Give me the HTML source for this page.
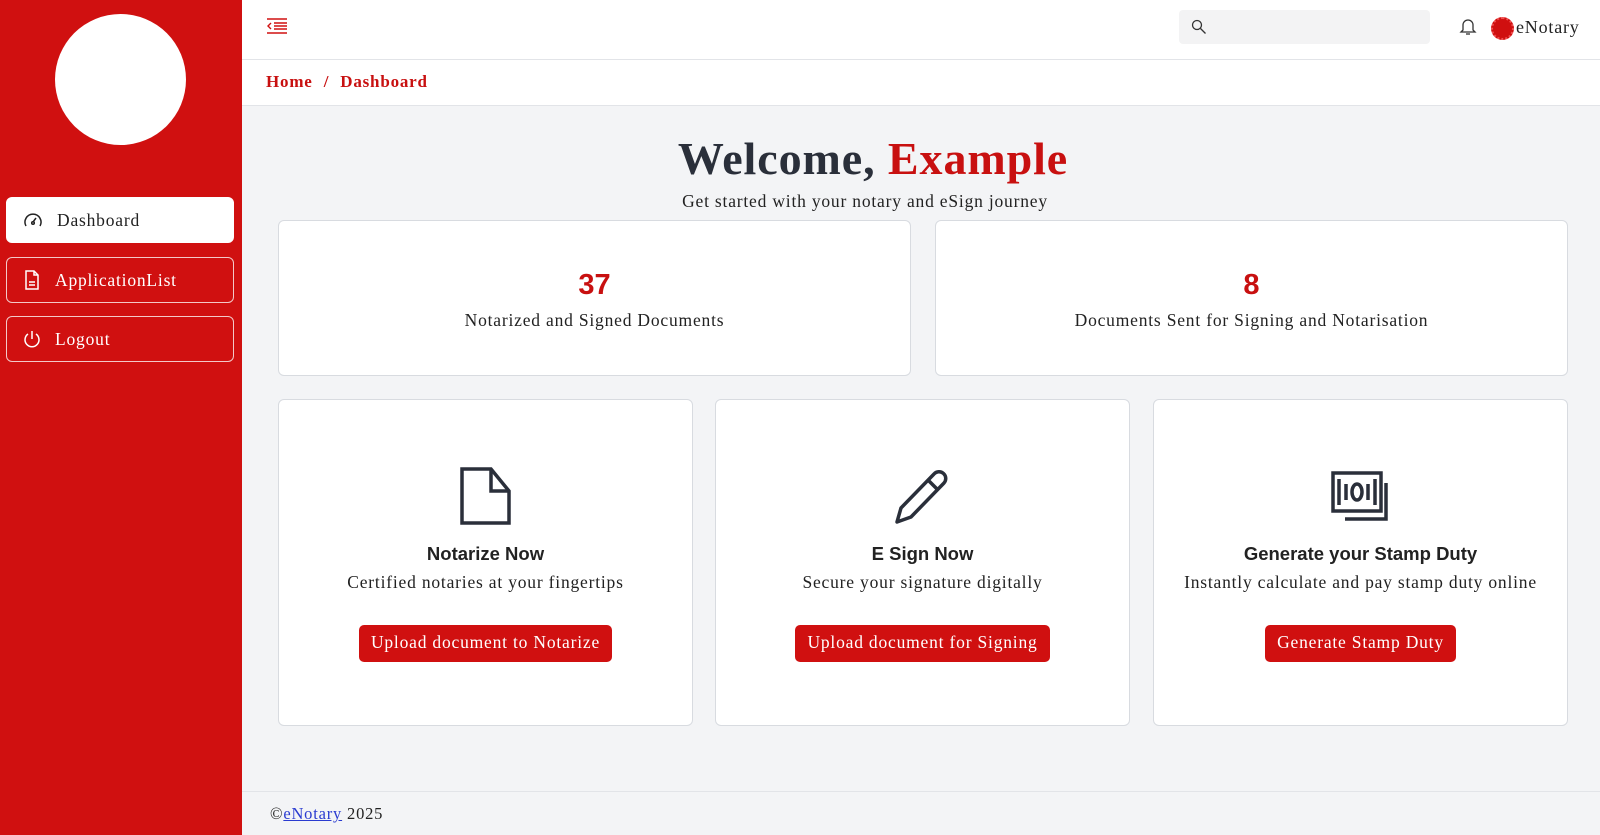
<!DOCTYPE html>
<html><head><meta charset="utf-8"><style>
*{box-sizing:border-box;margin:0;padding:0}
body{width:1600px;height:835px;overflow:hidden;background:#f3f4f6;font-family:"Liberation Serif",serif;color:#222;position:relative;letter-spacing:0.05em}
.sb{position:absolute;left:0;top:0;width:242px;height:835px;background:#d01010}
.av{position:absolute;left:55px;top:14px;width:131px;height:131px;border-radius:50%;background:#fff}
.nav{position:absolute;left:6px;width:228px;height:46px;border:1.5px solid #f3c9c9;border-radius:6px;color:#fff;font-size:17.5px;display:flex;align-items:center;padding-left:16px}
.nav svg{margin-right:14px}
.nav.act{background:#fff;color:#222;border-color:#fff}
.hd{position:absolute;left:242px;top:0;right:0;height:60px;background:#fff;border-bottom:1px solid #e2e4e8}
.bc{position:absolute;left:242px;top:60px;right:0;height:46px;background:#fff;border-bottom:1px solid #e2e4e8;color:#c81010;font-weight:bold;font-size:17px;padding:12px 0 0 24px}
.card{position:absolute;background:#fff;border:1px solid #d8dbe0;border-radius:6px;text-align:center}
.num{font-family:"Liberation Sans",sans-serif;font-weight:bold;color:#c81010;font-size:29px;letter-spacing:0}
.ct{font-size:17.5px;color:#222}
.t{font-family:"Liberation Sans",sans-serif;font-weight:bold;font-size:18.5px;color:#222;letter-spacing:0}
.btn{display:inline-block;background:#d01010;color:#fff;font-size:17.5px;border-radius:5px;padding:7px 12px;height:37px}
.ft{position:absolute;left:242px;right:0;top:791px;height:44px;background:#f3f4f6;border-top:1px solid #e2e4e8;font-size:16.5px;padding:12px 0 0 28px}
.ic{display:block;margin:67px auto 0;height:58px}
</style></head><body>
<div class="sb">
<div class="av"></div>
<div class="nav act" style="top:197px"><svg width="20" height="18" viewBox="0 0 20 18" fill="none" stroke="#222" stroke-width="1.5"><path d="M3 15a8 8 0 1 1 14 0"/><path d="M10 11l3-4"/><circle cx="10" cy="12" r="1.3"/></svg>Dashboard</div>
<div class="nav" style="top:257px"><svg width="18" height="20" viewBox="0 0 18 20" fill="none" stroke="#fff" stroke-width="1.5"><path d="M3 1h8l4 4v14H3z"/><path d="M11 1v4h4M6 12h6M6 15h6"/></svg>ApplicationList</div>
<div class="nav" style="top:316px"><svg width="18" height="20" viewBox="0 0 18 20" fill="none" stroke="#fff" stroke-width="1.5"><path d="M5 5a7 7 0 1 0 8 0"/><path d="M9 2v8"/></svg>Logout</div>
</div>
<div class="hd">
<svg style="position:absolute;left:24px;top:18px" width="22" height="16" viewBox="0 0 22 16" fill="none" stroke="#d01010" stroke-width="1.4"><path d="M1 1h20M8 5h13M8 8h13M8 11h13M1 15h20M5 5l-3 3 3 3"/></svg>
<div style="position:absolute;left:937px;top:10px;width:251px;height:34px;background:#f3f3f4;border-radius:4px"><svg style="position:absolute;left:12px;top:9px" width="16" height="16" viewBox="0 0 16 16" fill="none" stroke="#333" stroke-width="1.3"><circle cx="6" cy="6" r="4.5"/><path d="M9.5 9.5l5 5"/></svg></div>
<svg style="position:absolute;left:1217px;top:17px" width="18" height="19" viewBox="0 0 18 19" fill="none" stroke="#333" stroke-width="1.3"><path d="M4 13V8a5 5 0 0 1 10 0v5l2 2H2z"/><path d="M7 17h4"/></svg>
<div style="position:absolute;left:1249px;top:17px;width:23px;height:23px;border-radius:50%;background:#d01010;border:2px dotted #f05050"></div>
<div style="position:absolute;left:1274px;top:17px;font-size:18px;color:#222">eNotary</div>
</div>
<div class="bc">Home <span style="margin:0 6px">/</span> Dashboard</div>
<div style="position:absolute;left:250px;width:1246px;top:132px;text-align:center;font-size:46px;font-weight:bold;color:#2a2f3a;letter-spacing:0.02em">Welcome, <span style="color:#c81010">Example</span></div>
<div style="position:absolute;left:242px;width:1246px;top:191px;text-align:center;font-size:17.5px">Get started with your notary and eSign journey</div>
<div class="card" style="left:278px;top:220px;width:633px;height:156px"><div class="num" style="margin-top:48px">37</div><div class="ct" style="margin-top:8px">Notarized and Signed Documents</div></div>
<div class="card" style="left:935px;top:220px;width:633px;height:156px"><div class="num" style="margin-top:48px">8</div><div class="ct" style="margin-top:8px">Documents Sent for Signing and Notarisation</div></div>
<div class="card" style="left:278px;top:399px;width:415px;height:327px">
<svg class="ic" width="54" height="58" viewBox="0 0 54 58" fill="none" stroke="#2a2f3a" stroke-width="3.5"><path d="M3 2h29l18 22v32H3z"/><path d="M32 2v22h18"/></svg>
<div class="t" style="margin-top:18px">Notarize Now</div><div class="ct" style="margin-top:7px">Certified notaries at your fingertips</div><div class="btn" style="margin-top:32px">Upload document to Notarize</div></div>
<div class="card" style="left:715px;top:399px;width:415px;height:327px">
<svg class="ic" width="60" height="58" viewBox="0 0 60 58" fill="none" stroke="#2a2f3a" stroke-width="3.5" stroke-linejoin="round"><path d="M4 55L8 41 41 7a6.5 6.5 0 0 1 10 9L18 50z"/><path d="M35 13l10 10"/></svg>
<div class="t" style="margin-top:18px">E Sign Now</div><div class="ct" style="margin-top:7px">Secure your signature digitally</div><div class="btn" style="margin-top:32px">Upload document for Signing</div></div>
<div class="card" style="left:1153px;top:399px;width:415px;height:327px">
<svg class="ic" width="60" height="58" viewBox="0 0 60 58" fill="none" stroke="#2a2f3a" stroke-width="3.5"><rect x="2" y="6" width="48" height="38"/><path d="M8 12v26M44 12v26M55 16v36H14"/><ellipse cx="26" cy="25" rx="5" ry="8"/><path d="M15 17v16M37 17v16"/></svg>
<div class="t" style="margin-top:18px">Generate your Stamp Duty</div><div class="ct" style="margin-top:7px">Instantly calculate and pay stamp duty online</div><div class="btn" style="margin-top:32px">Generate Stamp Duty</div></div>
<div class="ft">©<span style="color:#2a3bd0;text-decoration:underline">eNotary</span> 2025</div>
</body></html>
